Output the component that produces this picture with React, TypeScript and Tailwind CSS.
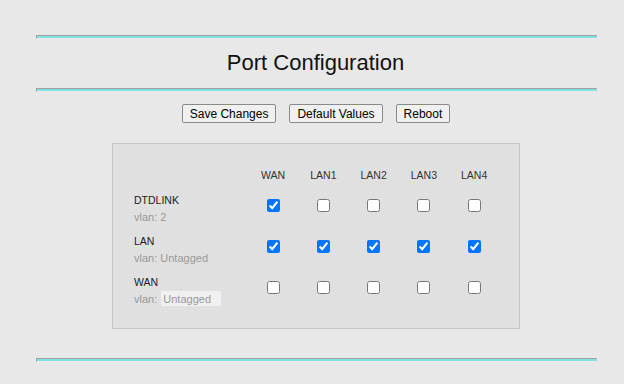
import React from "react"

const ports = ["WAN", "LAN1", "LAN2", "LAN3", "LAN4"]

const rows = [
  { name: "DTDLINK", vlan: "2", checked: [true, false, false, false, false], editable: false },
  { name: "LAN", vlan: "Untagged", checked: [true, true, true, true, true], editable: false },
  { name: "WAN", vlan: "Untagged", checked: [false, false, false, false, false], editable: true },
]

function Rule() {
  return <div className="h-[4px] w-full border-t border-l border-t-[#a0a0a0] border-l-[#a0a0a0] border-b border-r border-b-[#ececec] border-r-[#c8c8c8] bg-[#7fe3e3]" />
}

function Btn({ children }: { children: React.ReactNode }) {
  return (
    <button className="h-[19px] rounded-[2px] border border-[#8a8a8a] bg-[#f0f0f0] px-[7px] text-[12px] leading-none text-black">
      {children}
    </button>
  )
}

export default function App() {
  return (
    <div className="min-h-[384px] w-full bg-[#e8e8e8] pt-[35px] font-['Liberation_Sans',Arial,sans-serif] text-[#222]">
      <div className="ml-[36px] w-[561px]">
        <Rule />
        <div className="flex h-[49px] items-center justify-center pb-[2px] pr-[2px] text-[22px] leading-[25px] text-[#111]">
          Port Configuration
        </div>
        <Rule />

        <div className="mt-[12px] flex justify-center gap-[13px] pr-[1px]">
          <Btn>Save Changes</Btn>
          <Btn>Default Values</Btn>
          <Btn>Reboot</Btn>
        </div>

        <div className="ml-[76px] mt-[20px] w-[408px] border border-[#c6c6c6] bg-[#e0e0e0] pl-[21px] pr-[19px] pt-[23px] pb-[22px]">
          <div className="grid grid-cols-[114px_repeat(5,50.25px)] gap-y-[9px]">
            <div />
            {ports.map((p) => (
              <div key={p} className="flex h-[16px] items-center justify-center pt-[1px] text-[10.5px] text-[#333]">
                {p}
              </div>
            ))}

            {rows.map((r) => (
              <React.Fragment key={r.name}>
                <div className="flex flex-col">
                  <div className="h-[16px] text-[10.5px] leading-[16px] text-[#222]">{r.name}</div>
                  <div className="flex h-[16px] items-center pt-[1px] text-[11px] leading-[16px] text-[#999]">
                    <span>vlan:&nbsp;</span>
                    {r.editable ? (
                      <input
                        readOnly
                        value={r.vlan}
                        className="ml-[1px] h-[15px] w-[60px] bg-[#f0f0f0] px-[2px] text-[11px] text-[#999] outline-none"
                      />
                    ) : (
                      <span>{r.vlan}</span>
                    )}
                  </div>
                </div>
                {r.checked.map((c, i) => (
                  <div key={i} className="flex items-center justify-center pb-[5px]">
                    <input type="checkbox" defaultChecked={c} className="m-0 h-[13px] w-[13px]" />
                  </div>
                ))}
              </React.Fragment>
            ))}
          </div>
        </div>

        <div className="mt-[29px]">
          <Rule />
        </div>
      </div>
    </div>
  )
}
